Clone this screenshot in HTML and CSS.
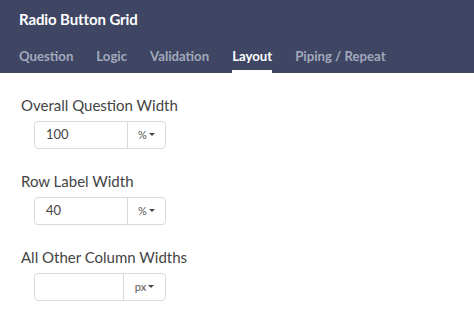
FILE: index.html
```html
<!DOCTYPE html>
<html>
<head>
<meta charset="utf-8">
<link rel="stylesheet" href="styles.css">
</head>
<body>
<div class="header">
  <div class="title">Radio Button Grid</div>
  <div class="tabs">
    <span class="tab">Question</span>
    <span class="tab">Logic</span>
    <span class="tab">Validation</span>
    <span class="tab active">Layout</span>
    <span class="tab">Piping / Repeat</span>
  </div>
</div>
<div class="content">
  <div class="field">
    <div class="label">Overall Question Width</div>
    <div class="group">
      <div class="input">100</div>
      <div class="addon">%<span class="caret"></span></div>
    </div>
  </div>
  <div class="field">
    <div class="label">Row Label Width</div>
    <div class="group">
      <div class="input">40</div>
      <div class="addon">%<span class="caret"></span></div>
    </div>
  </div>
  <div class="field">
    <div class="label">All Other Column Widths</div>
    <div class="group">
      <div class="input narrow"></div>
      <div class="addon wide">px<span class="caret"></span></div>
    </div>
  </div>
</div>
</body>
</html>
```
FILE: styles.css
```css
* { box-sizing: border-box; }
html, body { margin: 0; padding: 0; background: #fff; }
body { font-family: Lato, "Open Sans", sans-serif; width: 474px; height: 319px; overflow: hidden; }
.header { background: #3e4663; height: 73px; padding: 10px 0 0 19px; display: flex; flex-direction: column; }
.title { color: #fff; font-weight: 700; font-size: 15px; line-height: 18px; letter-spacing: -0.1px; }
.tabs { display: flex; gap: 23px; margin-top: 17px; }
.tab { color: #a3a9bc; font-weight: 700; font-size: 13.2px; line-height: 18px; height: 28px; padding-top: 2px; }
.tab.active { color: #fff; border-bottom: 3px solid #fff; }
.content { padding: 23px 0 0 21px; }
.field { margin-bottom: 23.5px; }
.label { color: #444; font-size: 15px; line-height: 18px; height: 20px; }
.group { display: flex; margin: 5px 0 0 13px; width: 132px; height: 27.5px; border: 1px solid #d9d9d9; border-radius: 4px; }
.input { width: 93px; border-right: 1px solid #d9d9d9; font-size: 13px; color: #444; line-height: 25px; padding-left: 11px; }
.input.narrow { width: 89px; }
.addon { flex: 1; display: flex; align-items: center; justify-content: center; font-size: 11px; color: #555; }
.caret { display: inline-block; width: 0; height: 0; border-left: 3px solid transparent; border-right: 3px solid transparent; border-top: 3px solid #444; margin-left: 2px; }
```
